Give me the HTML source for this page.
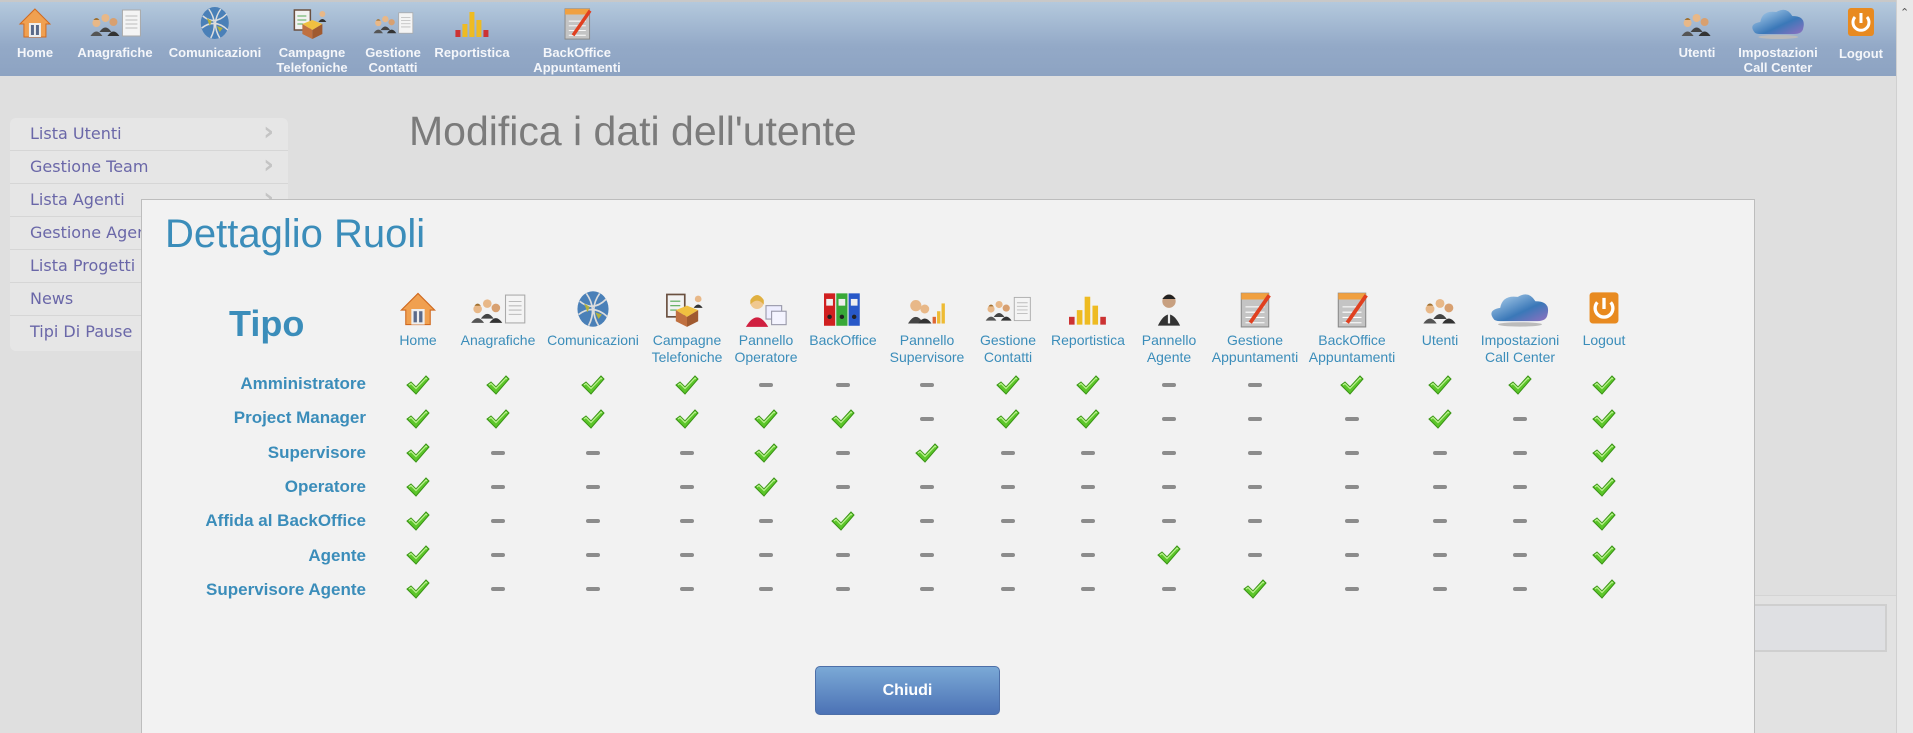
<!DOCTYPE html>
<html style="overflow:hidden;height:733px"><head><meta charset="utf-8">
<style>
*{box-sizing:border-box;margin:0;padding:0}
body{width:1913px;height:733px;overflow:hidden;background:#dfdfdf;font-family:"Liberation Sans",Arial,sans-serif;position:relative}
#top{position:absolute;left:0;top:0;width:1896px;height:76px;background:linear-gradient(#b4c9dd,#93a9c7 60%,#8da3c2);border-top:2px solid #c8c8c8}
.ni{position:absolute;top:4px;text-align:center;color:#f4f6fa;font-weight:bold;font-size:13px;line-height:15px;transform:translateX(-50%);white-space:nowrap}
.ni .ic{width:36px;height:34px;margin:0 auto 5px}
#sb{position:absolute;right:0;top:0;width:17px;height:733px;background:#e9e9e9;border-left:1px solid #d0d0d0}
#sb .ar{position:absolute;left:3px;top:6px;font-size:11px;color:#555}
#side{position:absolute;left:10px;top:118px;width:278px;height:233px;background:#e6e6e6;border-radius:6px}
#side div{height:33px;border-bottom:1px solid #d6d6d6;color:#6a67a8;font-family:"DejaVu Sans",sans-serif;font-size:16px;line-height:32px;padding-left:20px;position:relative}
#side div:last-child{border:none}
#side .ar{position:absolute;right:14px;top:-2px;color:#c4c4c4;font-weight:bold;font-size:26px}
#ttl{position:absolute;left:409px;top:108px;font-size:41px;color:#7b7b7b}
#rp{position:absolute;left:1754px;top:595px;width:142px;height:138px;background:#e2e2e2;border-top:1px solid #d4d4d4}
#rp .b{position:absolute;left:0;top:8px;width:133px;height:48px;background:#dfe0e3;border:2px solid #cfcfcf;border-left:none}
#modal{position:absolute;left:141px;top:199px;width:1614px;height:534px;background:#f2f2f2;border:1px solid #bdbdbd;border-bottom:none}
#dt{position:absolute;left:165px;top:212px;font-size:40px;color:#3b8dba}
#tipo{position:absolute;left:229px;top:303px;font-size:36px;font-weight:bold;color:#3b8dba}
.h{position:absolute;top:290px;width:110px;transform:translateX(-50%);text-align:center;color:#3b8dba;font-size:14px;line-height:17px;white-space:nowrap}
.h .ic{width:40px;height:38px;margin:0 auto 4px}
.rl{position:absolute;right:1547px;font-weight:bold;font-size:17px;color:#3b8dba;white-space:nowrap}
.c{position:absolute;transform:translate(-50%,-50%)}
.d{width:14px;height:4px;background:#8c8c8c;border-radius:2px}
.k{width:24px;height:22px}
#btn{position:absolute;left:815px;top:666px;width:185px;height:49px;border-radius:5px;background:linear-gradient(#7ba9d6,#4c72b5);border:1px solid #4d6fa8;color:#fff;font-weight:bold;font-size:16px;text-align:center;line-height:47px}
</style></head><body>
<svg width="0" height="0" style="position:absolute"><defs>
<symbol id="ck" viewBox="0 0 24 22"><path d="M1 11 L5 8 L10 13 L20 2 L23 5 L10 20 Z" fill="#5cc62a" stroke="#3a9415" stroke-width="1"/><path d="M3 11 L5 9.5 L10 14.5 L20 4 L21 5" fill="none" stroke="#b8f08c" stroke-width="1.3"/></symbol>
<symbol id="home" viewBox="0 0 36 34"><path d="M18 3 L33 18 L29 18 L29 31 L7 31 L7 18 L3 18 Z" fill="#f0a050" stroke="#d06a20"/><rect x="12" y="17" width="12" height="14" fill="#eee"/><rect x="14" y="19" width="3" height="10" fill="#5a6a8a"/><rect x="19" y="19" width="3" height="10" fill="#5a6a8a"/></symbol>
<symbol id="ppl" viewBox="0 0 36 34"><circle cx="9" cy="17" r="4" fill="#e8b888"/><path d="M3 30 Q9 21 15 30Z" fill="#555"/><circle cx="18" cy="12" r="4" fill="#e8b888"/><path d="M12 26 Q18 17 24 26Z" fill="#444"/><circle cx="26" cy="16" r="4" fill="#d8a070"/><path d="M20 30 Q26 21 32 30Z" fill="#333"/><path d="M6 14 Q9 10 12 14" fill="#a07030"/></symbol>
<symbol id="doc" viewBox="0 0 20 30"><rect x="1" y="2" width="18" height="26" fill="#f4f4f4" stroke="#aaa"/><path d="M4 8h12M4 12h12M4 16h12M4 20h12" stroke="#bbb"/></symbol>
<symbol id="globe" viewBox="0 0 36 34"><ellipse cx="18" cy="17" rx="14" ry="16" fill="#4a80b8"/><path d="M6 10 Q18 20 30 8 M5 22 Q18 12 31 24 M12 3 Q22 17 14 32 M24 3 Q14 17 23 32" stroke="#ddd" stroke-width="1.5" fill="none"/><path d="M10 12 l5 3 -2 5z M20 20 l6 2 -3 4z" fill="#b0b040"/></symbol>
<symbol id="camp" viewBox="0 0 40 34"><rect x="2" y="4" width="16" height="20" fill="#f2f2f2" stroke="#6a5040" stroke-width="1.5"/><path d="M5 10h9M5 14h9M5 18h9" stroke="#5a5"/><path d="M10 18 L20 14 L30 18 L20 24Z" fill="#f0c040"/><path d="M10 18 L20 24 L20 33 L10 28Z" fill="#c07040"/><path d="M30 18 L20 24 L20 33 L30 28Z" fill="#a05a30"/><circle cx="30" cy="8" r="3" fill="#e8b888"/><path d="M26 16 Q30 10 34 16Z" fill="#333"/></symbol>
<symbol id="pop" viewBox="0 0 40 34"><circle cx="12" cy="11" r="6" fill="#f0c890"/><path d="M6 9 Q12 0 18 9 L18 13 Q12 6 6 13Z" fill="#e0b040"/><path d="M2 33 Q12 16 22 33Z" fill="#d02040"/><rect x="20" y="14" width="14" height="12" fill="#eef" stroke="#99a"/><rect x="25" y="19" width="13" height="12" fill="#f4f4ff" stroke="#99a"/></symbol>
<symbol id="bo" viewBox="0 0 40 34"><rect x="3" y="3" width="10" height="29" fill="#d02020"/><rect x="14" y="3" width="10" height="29" fill="#38a838"/><rect x="25" y="3" width="10" height="29" fill="#2858c8"/><circle cx="8" cy="24" r="2" fill="#222"/><circle cx="19" cy="24" r="2" fill="#222"/><circle cx="30" cy="24" r="2" fill="#222"/><rect x="5" y="8" width="6" height="6" fill="#eee"/><rect x="16" y="8" width="6" height="6" fill="#eee"/><rect x="27" y="8" width="6" height="6" fill="#eee"/></symbol>
<symbol id="psup" viewBox="0 0 40 34"><circle cx="10" cy="14" r="5" fill="#e8b888"/><path d="M3 30 Q10 18 17 30Z" fill="#444"/><circle cx="18" cy="17" r="4" fill="#e8b888"/><path d="M12 30 Q18 21 24 30Z" fill="#333"/><rect x="25" y="24" width="3" height="6" fill="#d63"/><rect x="29" y="19" width="3" height="11" fill="#eb3"/><rect x="33" y="12" width="3" height="18" fill="#eb3"/></symbol>
<symbol id="rep" viewBox="0 0 40 34"><rect x="3" y="24" width="5" height="7" fill="#c33"/><rect x="10" y="18" width="5" height="13" fill="#eb2"/><rect x="17" y="6" width="5" height="25" fill="#eb2"/><rect x="24" y="14" width="5" height="17" fill="#eb2"/><rect x="31" y="24" width="5" height="7" fill="#c33"/></symbol>
<symbol id="ag" viewBox="0 0 36 34"><circle cx="18" cy="10" r="6" fill="#c8a080"/><path d="M12 8 Q18 0 24 8Z" fill="#222"/><path d="M8 32 Q18 12 28 32Z" fill="#333"/><path d="M17 18 L19 18 L19 30 L17 30Z" fill="#eee"/></symbol>
<symbol id="app" viewBox="0 0 36 36"><rect x="5" y="3" width="26" height="32" fill="#c4c4c4" stroke="#888"/><rect x="5" y="3" width="26" height="6" fill="#f0a040"/><path d="M9 16h18M9 21h18M9 26h18M9 31h18" stroke="#fff"/><path d="M12 30 L30 4 L33 6 L15 32Z" fill="#e04020"/></symbol>
<symbol id="cloud" viewBox="0 0 60 34"><ellipse cx="30" cy="31" rx="20" ry="2" fill="#bbb"/><path d="M6 26 Q0 18 12 16 Q14 4 28 6 Q38 0 44 10 Q58 10 55 22 Q54 28 46 28 L12 28 Q7 28 6 26Z" fill="url(#cg)"/><linearGradient id="cg" x1="0" y1="0" x2="1" y2="1"><stop offset="0" stop-color="#b8d8f0"/><stop offset=".6" stop-color="#3a78b8"/><stop offset="1" stop-color="#9070c0"/></linearGradient></symbol>
<symbol id="lo" viewBox="0 0 36 34"><rect x="5" y="2" width="26" height="28" rx="3" fill="#e88a20"/><path d="M12 11 A8 8 0 1 0 24 11" fill="none" stroke="#fff" stroke-width="3"/><path d="M18 7v10" stroke="#fff" stroke-width="3"/></symbol>
</defs></svg>

<div id="top">
<div class="ni" style="left:35px"><svg class="ic" style="display:block"><use href="#home"/></svg>Home</div>
<div class="ni" style="left:115px"><svg class="ic" viewBox="0 0 56 34" style="display:block;width:56px"><use href="#ppl" width="36" height="34"/><use href="#doc" x="34" y="2" width="20" height="30"/></svg>Anagrafiche</div>
<div class="ni" style="left:215px"><svg class="ic" style="display:block"><use href="#globe"/></svg>Comunicazioni</div>
<div class="ni" style="left:312px"><svg class="ic" style="display:block;width:42px"><use href="#camp"/></svg>Campagne<br>Telefoniche</div>
<div class="ni" style="left:393px"><svg class="ic" viewBox="0 0 56 34" style="display:block;width:44px"><use href="#ppl" width="36" height="34"/><use href="#doc" x="34" y="2" width="20" height="30"/></svg>Gestione<br>Contatti</div>
<div class="ni" style="left:472px"><svg class="ic" style="display:block;width:42px"><use href="#rep"/></svg>Reportistica</div>
<div class="ni" style="left:577px"><svg class="ic" style="display:block"><use href="#app"/></svg>BackOffice<br>Appuntamenti</div>
<div class="ni" style="left:1697px"><svg class="ic" style="display:block"><use href="#ppl"/></svg>Utenti</div>
<div class="ni" style="left:1778px"><svg class="ic" viewBox="0 0 60 34" style="display:block;width:62px"><use href="#cloud"/></svg>Impostazioni<br>Call Center</div>
<div class="ni" style="left:1861px"><svg class="ic" style="display:block"><use href="#lo"/></svg><div style="margin-top:6px">Logout</div></div>
</div>
<div id="sb"><span class="ar">&#x2303;</span></div>

<div id="side">
<div>Lista Utenti<span class="ar">&#x203A;</span></div>
<div>Gestione Team<span class="ar">&#x203A;</span></div>
<div>Lista Agenti<span class="ar">&#x203A;</span></div>
<div>Gestione Agenti</div>
<div>Lista Progetti</div>
<div>News</div>
<div>Tipi Di Pause</div>
</div>
<div id="ttl">Modifica i dati dell'utente</div>
<div id="rp"><div class="b"></div></div>

<div id="modal"></div>
<div id="dt">Dettaglio Ruoli</div>
<div id="tipo">Tipo</div>

<div class="h" style="left:418px"><svg class="ic" style="display:block"><use href="#home"/></svg>Home</div>
<div class="h" style="left:498px"><svg class="ic" viewBox="0 0 56 34" style="display:block;width:60px"><use href="#ppl" width="36" height="34"/><use href="#doc" x="34" y="2" width="20" height="30"/></svg>Anagrafiche</div>
<div class="h" style="left:593px"><svg class="ic" style="display:block"><use href="#globe"/></svg>Comunicazioni</div>
<div class="h" style="left:687px"><svg class="ic" style="display:block;width:48px"><use href="#camp"/></svg>Campagne<br>Telefoniche</div>
<div class="h" style="left:766px"><svg class="ic" style="display:block;width:48px"><use href="#pop"/></svg>Pannello<br>Operatore</div>
<div class="h" style="left:843px"><svg class="ic" style="display:block;width:46px"><use href="#bo"/></svg>BackOffice</div>
<div class="h" style="left:927px"><svg class="ic" style="display:block;width:48px"><use href="#psup"/></svg>Pannello<br>Supervisore</div>
<div class="h" style="left:1008px"><svg class="ic" viewBox="0 0 56 34" style="display:block;width:50px"><use href="#ppl" width="36" height="34"/><use href="#doc" x="34" y="2" width="20" height="30"/></svg>Gestione<br>Contatti</div>
<div class="h" style="left:1088px"><svg class="ic" style="display:block;width:48px"><use href="#rep"/></svg>Reportistica</div>
<div class="h" style="left:1169px"><svg class="ic" style="display:block"><use href="#ag"/></svg>Pannello<br>Agente</div>
<div class="h" style="left:1255px"><svg class="ic" style="display:block"><use href="#app"/></svg>Gestione<br>Appuntamenti</div>
<div class="h" style="left:1352px"><svg class="ic" style="display:block"><use href="#app"/></svg>BackOffice<br>Appuntamenti</div>
<div class="h" style="left:1440px"><svg class="ic" style="display:block"><use href="#ppl"/></svg>Utenti</div>
<div class="h" style="left:1520px"><svg class="ic" viewBox="0 0 60 34" style="display:block;width:66px"><use href="#cloud"/></svg>Impostazioni<br>Call Center</div>
<div class="h" style="left:1604px"><svg class="ic" style="display:block"><use href="#lo"/></svg>Logout</div>

<div class="rl" style="top:374px">Amministratore</div>
<div class="rl" style="top:408px">Project Manager</div>
<div class="rl" style="top:443px">Supervisore</div>
<div class="rl" style="top:477px">Operatore</div>
<div class="rl" style="top:511px">Affida al BackOffice</div>
<div class="rl" style="top:546px">Agente</div>
<div class="rl" style="top:580px">Supervisore Agente</div>

<svg class="c k" style="left:418px;top:385px"><use href="#ck"/></svg><svg class="c k" style="left:498px;top:385px"><use href="#ck"/></svg><svg class="c k" style="left:593px;top:385px"><use href="#ck"/></svg><svg class="c k" style="left:687px;top:385px"><use href="#ck"/></svg><div class="c d" style="left:766px;top:385px"></div><div class="c d" style="left:843px;top:385px"></div><div class="c d" style="left:927px;top:385px"></div><svg class="c k" style="left:1008px;top:385px"><use href="#ck"/></svg><svg class="c k" style="left:1088px;top:385px"><use href="#ck"/></svg><div class="c d" style="left:1169px;top:385px"></div><div class="c d" style="left:1255px;top:385px"></div><svg class="c k" style="left:1352px;top:385px"><use href="#ck"/></svg><svg class="c k" style="left:1440px;top:385px"><use href="#ck"/></svg><svg class="c k" style="left:1520px;top:385px"><use href="#ck"/></svg><svg class="c k" style="left:1604px;top:385px"><use href="#ck"/></svg>
<svg class="c k" style="left:418px;top:419px"><use href="#ck"/></svg><svg class="c k" style="left:498px;top:419px"><use href="#ck"/></svg><svg class="c k" style="left:593px;top:419px"><use href="#ck"/></svg><svg class="c k" style="left:687px;top:419px"><use href="#ck"/></svg><svg class="c k" style="left:766px;top:419px"><use href="#ck"/></svg><svg class="c k" style="left:843px;top:419px"><use href="#ck"/></svg><div class="c d" style="left:927px;top:419px"></div><svg class="c k" style="left:1008px;top:419px"><use href="#ck"/></svg><svg class="c k" style="left:1088px;top:419px"><use href="#ck"/></svg><div class="c d" style="left:1169px;top:419px"></div><div class="c d" style="left:1255px;top:419px"></div><div class="c d" style="left:1352px;top:419px"></div><svg class="c k" style="left:1440px;top:419px"><use href="#ck"/></svg><div class="c d" style="left:1520px;top:419px"></div><svg class="c k" style="left:1604px;top:419px"><use href="#ck"/></svg>
<svg class="c k" style="left:418px;top:453px"><use href="#ck"/></svg><div class="c d" style="left:498px;top:453px"></div><div class="c d" style="left:593px;top:453px"></div><div class="c d" style="left:687px;top:453px"></div><svg class="c k" style="left:766px;top:453px"><use href="#ck"/></svg><div class="c d" style="left:843px;top:453px"></div><svg class="c k" style="left:927px;top:453px"><use href="#ck"/></svg><div class="c d" style="left:1008px;top:453px"></div><div class="c d" style="left:1088px;top:453px"></div><div class="c d" style="left:1169px;top:453px"></div><div class="c d" style="left:1255px;top:453px"></div><div class="c d" style="left:1352px;top:453px"></div><div class="c d" style="left:1440px;top:453px"></div><div class="c d" style="left:1520px;top:453px"></div><svg class="c k" style="left:1604px;top:453px"><use href="#ck"/></svg>
<svg class="c k" style="left:418px;top:487px"><use href="#ck"/></svg><div class="c d" style="left:498px;top:487px"></div><div class="c d" style="left:593px;top:487px"></div><div class="c d" style="left:687px;top:487px"></div><svg class="c k" style="left:766px;top:487px"><use href="#ck"/></svg><div class="c d" style="left:843px;top:487px"></div><div class="c d" style="left:927px;top:487px"></div><div class="c d" style="left:1008px;top:487px"></div><div class="c d" style="left:1088px;top:487px"></div><div class="c d" style="left:1169px;top:487px"></div><div class="c d" style="left:1255px;top:487px"></div><div class="c d" style="left:1352px;top:487px"></div><div class="c d" style="left:1440px;top:487px"></div><div class="c d" style="left:1520px;top:487px"></div><svg class="c k" style="left:1604px;top:487px"><use href="#ck"/></svg>
<svg class="c k" style="left:418px;top:521px"><use href="#ck"/></svg><div class="c d" style="left:498px;top:521px"></div><div class="c d" style="left:593px;top:521px"></div><div class="c d" style="left:687px;top:521px"></div><div class="c d" style="left:766px;top:521px"></div><svg class="c k" style="left:843px;top:521px"><use href="#ck"/></svg><div class="c d" style="left:927px;top:521px"></div><div class="c d" style="left:1008px;top:521px"></div><div class="c d" style="left:1088px;top:521px"></div><div class="c d" style="left:1169px;top:521px"></div><div class="c d" style="left:1255px;top:521px"></div><div class="c d" style="left:1352px;top:521px"></div><div class="c d" style="left:1440px;top:521px"></div><div class="c d" style="left:1520px;top:521px"></div><svg class="c k" style="left:1604px;top:521px"><use href="#ck"/></svg>
<svg class="c k" style="left:418px;top:555px"><use href="#ck"/></svg><div class="c d" style="left:498px;top:555px"></div><div class="c d" style="left:593px;top:555px"></div><div class="c d" style="left:687px;top:555px"></div><div class="c d" style="left:766px;top:555px"></div><div class="c d" style="left:843px;top:555px"></div><div class="c d" style="left:927px;top:555px"></div><div class="c d" style="left:1008px;top:555px"></div><div class="c d" style="left:1088px;top:555px"></div><svg class="c k" style="left:1169px;top:555px"><use href="#ck"/></svg><div class="c d" style="left:1255px;top:555px"></div><div class="c d" style="left:1352px;top:555px"></div><div class="c d" style="left:1440px;top:555px"></div><div class="c d" style="left:1520px;top:555px"></div><svg class="c k" style="left:1604px;top:555px"><use href="#ck"/></svg>
<svg class="c k" style="left:418px;top:589px"><use href="#ck"/></svg><div class="c d" style="left:498px;top:589px"></div><div class="c d" style="left:593px;top:589px"></div><div class="c d" style="left:687px;top:589px"></div><div class="c d" style="left:766px;top:589px"></div><div class="c d" style="left:843px;top:589px"></div><div class="c d" style="left:927px;top:589px"></div><div class="c d" style="left:1008px;top:589px"></div><div class="c d" style="left:1088px;top:589px"></div><div class="c d" style="left:1169px;top:589px"></div><svg class="c k" style="left:1255px;top:589px"><use href="#ck"/></svg><div class="c d" style="left:1352px;top:589px"></div><div class="c d" style="left:1440px;top:589px"></div><div class="c d" style="left:1520px;top:589px"></div><svg class="c k" style="left:1604px;top:589px"><use href="#ck"/></svg>

<div id="btn">Chiudi</div>
</body></html>
